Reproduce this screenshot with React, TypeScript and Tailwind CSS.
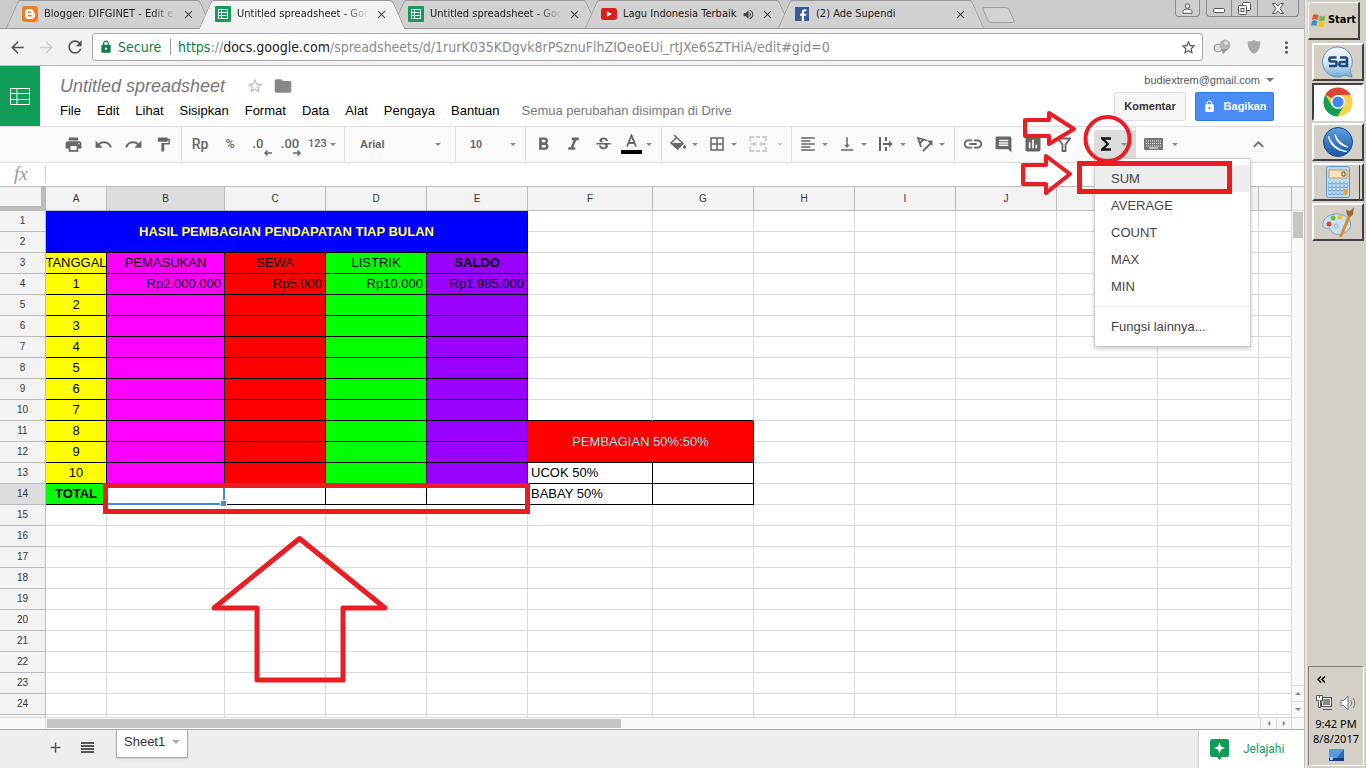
import React from 'react';
import {
  MdPrint, MdUndo, MdRedo, MdFormatPaint, MdFormatBold, MdFormatItalic, MdStrikethroughS,
  MdBorderAll, MdFormatAlignLeft, MdVerticalAlignBottom, MdInsertLink,
  MdInsertComment, MdInsertChart, MdFunctions, MdKeyboardArrowUp,
  MdArrowBack, MdArrowForward, MdRefresh, MdLock, MdStarBorder, MdFolder, MdClose, MdMoreVert,
  MdAdd, MdVolumeUp,
} from 'react-icons/md';

type Tab = { title: string; icon: React.ReactNode; active?: boolean; audio?: boolean };

const SheetsIcon = () => (
  <svg width="16" height="16" viewBox="0 0 16 16" className="shrink-0">
    <rect width="16" height="16" rx="1" fill="#0f9d58" />
    <path d="M3.5 3.5h9v9h-9zM3.5 6.5h9M3.5 9.5h9M6.5 3.5v9" fill="none" stroke="#fff" />
  </svg>
);

const BloggerIcon = () => (
  <svg width="16" height="16" viewBox="0 0 16 16" className="shrink-0">
    <rect width="16" height="16" rx="3" fill="#f57d20" />
    <path d="M6 3h2.5C10.500 3 11.500 4.200 11.500 6c0 .8.4 1 1 1 .5 0 .5.500.5 1v1.500C13 11.500 11.500 13 9.500 13H6.300C4.300 13 3 11.600 3 9.700V6.200C3 4.300 4.300 3 6 3z" fill="#fff" />
    <path d="M6.300 6.300h2.200M6.300 9.700h3.400" stroke="#f57d20" strokeWidth="1.400" strokeLinecap="round" />
  </svg>
);

const YoutubeIcon = () => (
  <svg width="16" height="16" viewBox="0 0 16 16" className="shrink-0">
    <rect y="2" width="16" height="12" rx="2.500" fill="#d8201f" />
    <path d="M6 5.200v5.600L10.800 8z" fill="#fff" />
  </svg>
);

const FacebookIcon = () => (
  <svg width="16" height="16" viewBox="0 0 16 16" className="shrink-0">
    <rect x="1" y="1" width="14" height="14" fill="#3b5998" />
    <path d="M10 15V9.700h2l.3-2H10V6.400c0-.7.3-1.100 1.100-1.100h1.300V3.400c-.3 0-1-.1-1.700-.1-1.800 0-2.900 1-2.900 2.800v1.600H6v2h1.800V15z" fill="#fff" />
  </svg>
);

const tabs: Tab[] = [
  { title: 'Blogger: DIFGINET - Edit e', icon: <BloggerIcon /> },
  { title: 'Untitled spreadsheet - Goo', icon: <SheetsIcon />, active: true },
  { title: 'Untitled spreadsheet - Goo', icon: <SheetsIcon /> },
  { title: 'Lagu Indonesia Terbaik', icon: <YoutubeIcon />, audio: true },
  { title: '(2) Ade Supendi', icon: <FacebookIcon /> },
];

const menus = ['File', 'Edit', 'Lihat', 'Sisipkan', 'Format', 'Data', 'Alat', 'Pengaya', 'Bantuan'];
const functions = ['SUM', 'AVERAGE', 'COUNT', 'MAX', 'MIN'];
const columns = ['A', 'B', 'C', 'D', 'E', 'F', 'G', 'H', 'I', 'J', 'K', 'L', ''];
const rows = Array.from({ length: 25 }, (_, i) => i + 1);

const columnFill = ['bg-[#ffff00]', 'bg-[#ff00ff]', 'bg-[#ff0000]', 'bg-[#00ff00]', 'bg-[#9900ff]'];
const headings = ['TANGGAL', 'PEMASUKAN', 'SEWA', 'LISTRIK', 'SALDO'];
const amounts = ['1', 'Rp2.000.000', 'Rp5.000', 'Rp10.000', 'Rp1.985.000'];

const Caret = ({ light = false }: { light?: boolean }) => (
  <svg width="6" height="3" viewBox="0 0 6 3" className={light ? 'shrink-0 text-[#ccc]' : 'shrink-0 text-[#888]'}>
    <path d="M0 0h6L3 3z" fill="currentColor" />
  </svg>
);

const Group = ({ children, className = '' }: { children: React.ReactNode; className?: string }) => (
  <div className={`flex h-full shrink-0 items-center border-r border-[#dcdcdc] ${className}`}>{children}</div>
);

const Tool = ({ label, children }: { label: string; children: React.ReactNode }) => (
  <button aria-label={label} className="flex h-7 w-[30px] shrink-0 items-center justify-center">{children}</button>
);

const MenuTool = ({ label, children }: { label: string; children: React.ReactNode }) => (
  <button aria-label={label} className="flex h-7 w-[39px] shrink-0 items-center gap-[5px] pl-[7px]">
    {children}
    <Caret />
  </button>
);

function TabStrip() {
  return (
    <div className="flex h-[29px] shrink-0 border-b border-[#9a9a9a] bg-[#cbcbcb] pl-3">
      {tabs.map((tab, i) => (
        <div
          key={i}
          className={`relative w-[193px] ${tab.active ? 'z-10 h-[29px]' : 'h-7'}`}
        >
          <div className={`absolute inset-y-0 right-1/2 left-0 -skew-x-[24deg] rounded-tl-[3px] border-t border-l border-[#979797] ${tab.active ? 'bg-[#f2f2f2]' : 'bg-[#d1d1d1]'}`} />
          <div className={`absolute inset-y-0 right-0 left-1/2 skew-x-[24deg] rounded-tr-[3px] border-t border-r border-[#979797] ${tab.active ? 'bg-[#f2f2f2]' : 'bg-[#d1d1d1]'}`} />
          <div className={`absolute inset-y-0 right-1/3 left-1/3 border-t border-[#979797] ${tab.active ? 'bg-[#f2f2f2]' : 'bg-[#d1d1d1]'}`} />
          <div className="relative flex h-7 items-center gap-[6px] px-[10px]">
            {tab.icon}
            <span className={`min-w-0 flex-1 text-[11px] whitespace-nowrap text-[#222] ${i < 3 ? '[mask-image:linear-gradient(to_right,black_82%,transparent)]' : ''}`}>{tab.title}</span>
            {tab.audio && <MdVolumeUp size={13} className="shrink-0 text-[#444]" />}
            <button aria-label="Tutup tab" className="shrink-0"><MdClose size={13} className="text-[#444]" /></button>
          </div>
        </div>
      ))}
      <button aria-label="Tab baru" className="mt-[7px] ml-2 h-4 w-[27px] skew-x-[24deg] rounded-[3px] border border-[#a0a0a0] bg-[#d3d3d3]" />
      <div className="mr-[5px] ml-auto flex h-[17px]">
        <button aria-label="Profil" className="mr-[6px] flex w-[25px] items-center justify-center rounded-b border border-t-0 border-[#8a8a8a] bg-[#cfcfcf]">
          <svg width="11" height="11" viewBox="0 0 11 11" fill="#fff" stroke="#555">
            <circle cx="5.500" cy="3" r="2.200" />
            <path d="M1 10.300V8.500C1 6.500 3 6.200 5.500 6.200s4.500.3 4.500 2.300v1.800z" />
          </svg>
        </button>
        <button aria-label="Perkecil" className="flex w-[26px] items-center justify-center rounded-bl border border-t-0 border-[#8a8a8a]">
          <svg width="12" height="12" viewBox="0 0 12 12"><rect x=".5" y="6.500" width="11" height="4" rx="1" fill="#fff" stroke="#555" /></svg>
        </button>
        <button aria-label="Pulihkan" className="flex w-[25px] items-center justify-center border-b border-[#8a8a8a]">
          <svg width="13" height="13" viewBox="0 0 13 13" fill="#fff" stroke="#555">
            <rect x="4.500" y=".5" width="8" height="8" rx="1" />
            <rect x=".5" y="3.500" width="8" height="9" rx="1" />
            <rect x="3" y="6.500" width="3" height="3" />
          </svg>
        </button>
        <button aria-label="Tutup" className="flex w-[42px] items-center justify-center rounded-br border border-t-0 border-[#8a8a8a]">
          <svg width="12" height="11" viewBox="0 0 12 11" fill="#fff" stroke="#555">
            <path d="M.5.500h3.200L6 3 8.300.5h3.200L8 5.500l3.500 5H8.300L6 8l-2.300 2.500H.5L4 5.500z" />
          </svg>
        </button>
      </div>
    </div>
  );
}

function AddressBar() {
  return (
    <div className="flex h-[37px] shrink-0 items-center border-b border-[#b9b9b9] bg-[#f2f2f2] pl-2">
      <button aria-label="Kembali" className="flex w-[29px] shrink-0"><MdArrowBack size={19} className="text-[#555]" /></button>
      <button aria-label="Maju" className="flex w-[28px] shrink-0"><MdArrowForward size={19} className="text-[#ccc]" /></button>
      <button aria-label="Muat ulang" className="flex w-[27px] shrink-0"><MdRefresh size={20} className="text-[#555]" /></button>
      <label className="relative flex h-7 min-w-0 flex-1 items-center rounded-[3px] border border-[#a9a9a9] bg-white pr-[5px] pl-[6px]">
        <MdLock size={14} className="mr-[5px] shrink-0 text-[#0b8043]" />
        <span className="w-[52px] shrink-0 text-[14px] text-[#0b8043]">Secure</span>
        <span className="mr-[7px] h-4 w-px shrink-0 bg-[#999]" />
        <span className="min-w-0 flex-1 truncate text-[14px] text-[#8a8a8a]">
          <span className="text-[#0b8043]">https</span>://<span className="text-[#222]">docs.google.com</span>
          /spreadsheets/d/1rurK035KDgvk8rPSznuFlhZIOeoEUi_rtJXe6SZTHiA/edit#gid=0
        </span>
        <input aria-label="Alamat" className="absolute inset-0 w-full opacity-0" />
        <MdStarBorder size={17} className="text-[#555]" />
      </label>
      <div className="flex shrink-0 items-center pr-2 pl-[10px]">
        <svg width="18" height="16" viewBox="0 0 18 16" className="mr-4">
          <circle cx="5" cy="9" r="4" fill="#ddd" stroke="#999" />
          <circle cx="12" cy="6" r="5.500" fill="#b5b5b5" />
          <path d="M8 10l2 5 5-5z" fill="#999" />
          <circle cx="13" cy="4" r="2" fill="#ddd" />
        </svg>
        <svg width="14" height="14" viewBox="0 0 14 14" className="mr-4">
          <path d="M7 0c2 1.200 4 1.600 6.300 1.600C13.500 7 12 11.500 7 14 2 11.500.5 7 .7 1.600 3 1.600 5 1.200 7 0z" fill="#a9a9a9" />
        </svg>
        <button aria-label="Menu"><MdMoreVert size={19} className="text-[#555]" /></button>
      </div>
    </div>
  );
}

function DocsHeader() {
  return (
    <header className="flex h-[60px] shrink-0 bg-white">
      <a href="#home" aria-label="Beranda Spreadsheet" className="flex w-10 shrink-0 items-center justify-center bg-[#0f9d58]">
        <svg width="20" height="17" viewBox="0 0 20 17" fill="none" stroke="#fff">
          <path d="M.5.500h19v16H.5zM.5 5.500h19M.5 11.500h19M7 .5v16" />
        </svg>
      </a>
      <div className="flex flex-col pt-2 pl-5">
        <div className="flex h-6 items-center">
          <input aria-label="Judul" defaultValue="Untitled spreadsheet" className="w-[186px] text-[18px] text-[#777] italic outline-none" />
          <MdStarBorder size={18} className="mr-[9px] text-[#bbb]" />
          <MdFolder size={20} className="text-[#888]" />
        </div>
        <nav className="flex h-[26px] items-center gap-4 text-[13px] text-black">
          {menus.map((m) => <button key={m}>{m}</button>)}
          <span className="ml-[6px] text-[#777]">Semua perubahan disimpan di Drive</span>
        </nav>
      </div>
      <div className="mr-[30px] ml-auto flex flex-col items-end pt-[6px]">
        <button className="flex h-4 items-center gap-[6px] text-[11px] text-[#555]">
          budiextrem@gmail.com
          <svg width="8" height="4" viewBox="0 0 8 4"><path d="M0 0h8L4 4z" fill="#777" /></svg>
        </button>
        <div className="mt-1 flex gap-[9px] text-[11px] font-bold">
          <button className="h-[29px] w-[72px] rounded-[2px] border border-[#dcdcdc] bg-[#f5f5f5] text-[#333]">Komentar</button>
          <button className="flex h-[29px] w-[79px] items-center justify-center gap-2 rounded-[2px] border border-[#3079ed] bg-[#4a8cf6] text-white">
            <MdLock size={13} />Bagikan
          </button>
        </div>
      </div>
    </header>
  );
}

function FunctionMenu() {
  return (
    <div role="menu" className="absolute top-full left-0 z-20 w-[157px] border border-[#ccc] bg-white py-[6px] text-[13px] text-[#444] shadow-[0_2px_4px_rgba(0,0,0,0.2)]">
      {functions.map((name) => (
        <button key={name} role="menuitem" className={`block h-[27px] w-full pl-4 text-left ${name === 'SUM' ? 'bg-[#eee]' : ''}`}>{name}</button>
      ))}
      <hr className="my-[6px] border-[#ebebeb]" />
      <button role="menuitem" className="block h-[27px] w-full pl-4 text-left">Fungsi lainnya...</button>
    </div>
  );
}

function Toolbar() {
  return (
    <div className="flex h-[37px] shrink-0 items-center border-y border-[#dcdcdc] bg-[#fafafa] pb-px text-[#666]">
      <Group className="pr-[3px] pl-[58px]">
        <Tool label="Cetak"><MdPrint size={19} /></Tool>
        <Tool label="Urungkan"><MdUndo size={19} /></Tool>
        <Tool label="Ulangi"><MdRedo size={19} /></Tool>
        <Tool label="Format cat"><MdFormatPaint size={17} /></Tool>
      </Group>
      <Group className="pr-1 pl-[3px] font-['Roboto',sans-serif] text-[14px] font-medium">
        <Tool label="Mata uang">Rp</Tool>
        <Tool label="Persen"><span className="text-[13px]">%</span></Tool>
        <Tool label="Kurangi desimal">
          <span className="relative pr-1 text-[13px]">.0
            <svg width="8" height="6" viewBox="0 0 8 6" className="absolute right-[-4px] bottom-[-2px]"><path d="M8 3H1M3.500.5L1 3l2.500 2.500" fill="none" stroke="currentColor" strokeWidth="1.500" /></svg>
          </span>
        </Tool>
        <Tool label="Tambah desimal">
          <span className="relative text-[13px]">.00
            <svg width="8" height="6" viewBox="0 0 8 6" className="absolute right-[-2px] bottom-[-2px]"><path d="M0 3h7M4.500.5L7 3 4.500 5.500" fill="none" stroke="currentColor" strokeWidth="1.500" /></svg>
          </span>
        </Tool>
        <button aria-label="Format lainnya" className="flex h-7 w-[35px] items-center gap-[3px] pl-[3px] text-[11px]">123<Caret /></button>
      </Group>
      <Group className="w-[111px] pr-[14px] pl-[15px]">
        <select aria-label="Font" className="min-w-0 flex-1 appearance-none text-[11px] font-bold outline-none"><option>Arial</option></select>
        <Caret />
      </Group>
      <Group className="w-[70px] pr-[9px] pl-[14px]">
        <select aria-label="Ukuran font" className="min-w-0 flex-1 appearance-none text-[11px] font-bold outline-none"><option>10</option></select>
        <Caret />
      </Group>
      <Group className="pr-2 pl-[2px]">
        <Tool label="Tebal"><MdFormatBold size={21} /></Tool>
        <Tool label="Miring"><MdFormatItalic size={21} /></Tool>
        <Tool label="Coret"><MdStrikethroughS size={19} /></Tool>
        <button aria-label="Warna teks" className="flex h-7 w-[35px] items-center gap-1 pl-[3px]">
          <svg width="21" height="20" viewBox="0 0 21 20" className="shrink-0">
            <path d="M6 12.500L10.500 1.500l4.500 11M7.500 9h6" fill="none" stroke="currentColor" strokeWidth="1.800" />
            <path d="M0 16h21v4H0z" fill="#000" />
          </svg>
          <Caret />
        </button>
      </Group>
      <Group className="w-[130px]">
        <MenuTool label="Warna isian">
          <svg width="18" height="18" viewBox="0 0 18 18" className="shrink-0">
            <path d="M5 0l9 8.500-5.500 5.500L2 8l5-5" fill="none" stroke="currentColor" strokeWidth="1.500" />
            <path d="M2.500 8h11l-5 5.500z" fill="currentColor" />
            <path d="M15.500 9.500c1 1.400 1.500 2 1.500 2.700a1.500 1.500 0 01-3 0c0-.7.5-1.300 1.500-2.700z" fill="currentColor" />
          </svg>
        </MenuTool>
        <MenuTool label="Batas"><MdBorderAll size={18} className="shrink-0" /></MenuTool>
        <button aria-label="Gabungkan sel" className="flex h-7 flex-1 items-center gap-[10px] pl-[9px] text-[#ccc]">
          <svg width="18" height="16" viewBox="0 0 18 16" fill="none" stroke="currentColor" strokeWidth="2" className="shrink-0">
            <path d="M5 1H1v4M1 11v4h4M13 1h4v4M17 11v4h-4M7 1h4M7 15h4M1 8h6M17 8h-6" />
            <path d="M5 6l2 2-2 2M13 6l-2 2 2 2" strokeWidth="1.500" />
          </svg>
          <Caret light />
        </button>
      </Group>
      <Group className="w-[163px]">
        <MenuTool label="Perataan horizontal"><MdFormatAlignLeft size={18} className="shrink-0" /></MenuTool>
        <MenuTool label="Perataan vertikal"><MdVerticalAlignBottom size={18} className="shrink-0" /></MenuTool>
        <MenuTool label="Pembungkusan teks">
          <svg width="18" height="18" viewBox="0 0 18 18" fill="none" stroke="currentColor" strokeWidth="2" className="shrink-0">
            <path d="M3 2v14M9 2v4M9 12v4M6 9h8" />
            <path d="M12 5.500L15.500 9 12 12.500z" fill="currentColor" stroke="none" />
          </svg>
        </MenuTool>
        <MenuTool label="Rotasi teks">
          <svg width="18" height="18" viewBox="0 0 18 18" fill="none" stroke="currentColor" strokeWidth="1.800" className="shrink-0">
            <path d="M5 12L2 3l9 2.500M4 8l3.500-3.500" />
            <path d="M7 16l8-8" />
            <path d="M11 5.500h5.500V11z" fill="currentColor" stroke="none" />
          </svg>
        </MenuTool>
      </Group>
      <Group className="pl-[3px]">
        <Tool label="Sisipkan tautan"><MdInsertLink size={22} /></Tool>
        <Tool label="Sisipkan komentar"><MdInsertComment size={19} /></Tool>
        <Tool label="Sisipkan diagram"><MdInsertChart size={20} /></Tool>
        <button aria-label="Filter" className="flex h-7 w-[46px] items-center gap-3 pl-[9px]">
          <svg width="14" height="15" viewBox="0 0 14 15" fill="none" stroke="currentColor" strokeWidth="1.800" className="shrink-0">
            <path d="M1 1.500h12L8.500 7.500V14h-3V7.500z" />
          </svg>
          <Caret />
        </button>
        <div className="relative flex h-7 w-[41px] items-center">
          <button aria-label="Fungsi" className="flex h-7 w-full items-center gap-[5px] bg-[#dcdcdc] pl-[2px] text-[#111]">
            <MdFunctions size={20} /><Caret />
          </button>
          <FunctionMenu />
        </div>
      </Group>
      <button aria-label="Alat masukan" className="flex h-7 items-center gap-[9px] pl-2">
        <svg width="19" height="12" viewBox="0 0 19 12">
          <rect width="19" height="12" rx="1" fill="#777" />
          <path d="M2 3h15M2 5.500h15M2 8h15" stroke="#fff" strokeDasharray="1 1" />
          <path d="M5 10h9" stroke="#fff" />
        </svg>
        <Caret />
      </button>
      <button aria-label="Sembunyikan menu" className="mr-[35px] ml-auto"><MdKeyboardArrowUp size={21} /></button>
    </div>
  );
}

// merged cells and coloured block in A1:G14, everything else is an empty gridline cell
function renderCell(row: number, col: number) {
  const base = 'h-[21px] overflow-hidden border-r border-b p-0 whitespace-nowrap';
  const key = `${row}-${col}`;
  if (row === 1 && col === 0) {
    return <td key={key} colSpan={5} rowSpan={2} className={`${base} border-black bg-[#0000ff] text-center font-bold text-[#ffff4d]`}>HASIL PEMBAGIAN PENDAPATAN TIAP BULAN</td>;
  }
  if (row <= 2 && col < 5) return null;
  if (row === 11 && col === 5) {
    return <td key={key} colSpan={2} rowSpan={2} className={`${base} border-black bg-[#ff0000] text-center text-[#76eeee]`}>PEMBAGIAN 50%:50%</td>;
  }
  if ((row === 11 || row === 12) && (col === 5 || col === 6)) return null;
  if (row === 3 && col < 5) {
    return (
      <td key={key} className={`${base} border-black ${columnFill[col]} ${col === 4 ? 'font-bold' : ''}`}>
        <div className="flex justify-center">{headings[col]}</div>
      </td>
    );
  }
  if (row >= 4 && row <= 13 && col < 5) {
    const value = col === 0 ? String(row - 3) : row === 4 ? amounts[col] : '';
    return <td key={key} className={`${base} border-black ${columnFill[col]} ${col === 0 ? 'text-center' : 'pr-[3px] text-right'}`}>{value}</td>;
  }
  if (row === 14 && col === 0) {
    return <td key={key} className={`${base} border-black bg-[#00ff00] text-center font-bold`}>TOTAL</td>;
  }
  if (row === 14 && col === 1) {
    return (
      <td key={key} className="relative h-[21px] border-r-2 border-b-2 border-[#4a86e8] p-0">
        <span className="absolute -right-1 -bottom-1 size-[7px] border border-white bg-[#4a86e8]" />
      </td>
    );
  }
  if ((row === 14 && col < 5) || ((row === 13 || row === 14) && (col === 5 || col === 6))) {
    return <td key={key} className={`${base} border-black pl-[3px]`}>{col === 5 ? (row === 13 ? 'UCOK 50%' : 'BABAY 50%') : ''}</td>;
  }
  if (row === 10 && (col === 5 || col === 6)) {
    return <td key={key} className={`${base} border-r-[#d9d9d9] border-b-black`} />;
  }
  return <td key={key} className={`${base} border-[#d9d9d9]`} />;
}

function Grid() {
  return (
    <div className="flex min-h-0 flex-1">
      <div className="min-w-0 flex-1 overflow-hidden">
        <table className="w-full table-fixed border-separate border-spacing-0 text-[13px] leading-5 text-black">
          <colgroup>
            <col className="w-[46px]" />
            <col className="w-[61px]" />
            <col className="w-[118px]" />
            <col className="w-[101px]" />
            <col className="w-[101px]" />
            <col className="w-[101px]" />
            <col className="w-[125px]" />
            <col className="w-[101px]" />
            <col className="w-[101px]" />
            <col className="w-[101px]" />
            <col className="w-[101px]" />
            <col className="w-[101px]" />
            <col className="w-[101px]" />
            <col />
          </colgroup>
          <thead>
            <tr className="text-[10px] text-[#333]">
              <th className="h-[25px] border-t border-r-[5px] border-b-[5px] border-[#bbb] bg-[#f3f3f3] p-0" />
              {columns.map((c, i) => (
                <th key={i} className={`h-[25px] border-t border-r border-b border-[#bbb] p-0 font-normal ${c === 'B' ? 'bg-[#ddd]' : 'bg-[#f3f3f3]'}`}>{c}</th>
              ))}
            </tr>
          </thead>
          <tbody>
            {rows.map((row) => (
              <tr key={row}>
                <th className={`h-[21px] border-r border-b border-[#bbb] p-0 text-[10px] font-normal text-[#333] ${row === 14 ? 'bg-[#ddd]' : 'bg-[#f3f3f3]'}`}>{row < 25 ? row : ''}</th>
                {columns.map((_, col) => renderCell(row, col))}
              </tr>
            ))}
          </tbody>
        </table>
      </div>
      {/* vertical scrollbar */}
      <div className="flex w-3 shrink-0 flex-col bg-[#f8f8f8]">
        <div className="h-[25px] border-y border-t-[#bbb] border-b-[#d9d9d9] bg-[#f3f3f3]" />
        <div className="mx-px mt-px h-[26px] bg-[#c5c5c5]" />
        <div className="mt-auto flex h-4 items-center justify-center border-t border-[#d9d9d9]"><span className="rotate-180"><Caret /></span></div>
        <div className="flex h-4 items-center justify-center border-t border-[#d9d9d9]"><Caret /></div>
      </div>
    </div>
  );
}

function Footer() {
  return (
    <>
      <div className="flex h-3 shrink-0 border-t border-[#d9d9d9] bg-[#f8f8f8]">
        <div className="w-[46px] shrink-0 border-r border-[#d9d9d9]" />
        <div className="min-w-0 flex-1 py-px pl-px"><div className="h-full w-[47.3%] bg-[#c5c5c5]" /></div>
        <div className="flex w-4 items-center justify-center border-l border-[#d9d9d9]"><span className="rotate-90"><Caret /></span></div>
        <div className="flex w-4 items-center justify-center border-x border-[#d9d9d9]"><span className="-rotate-90"><Caret /></span></div>
        <div className="w-3" />
      </div>
      <footer className="flex h-[39px] shrink-0 border-t border-[#aaa] bg-[#eee]">
        <button aria-label="Tambahkan sheet" className="ml-[47px] flex w-[34px] items-center pb-1 text-[#555]"><MdAdd size={17} /></button>
        <button aria-label="Semua sheet" className="mr-[22px] flex items-center pb-1 text-[#555]">
          <svg width="13" height="11" viewBox="0 0 13 11"><path d="M0 1h13M0 4h13M0 7h13M0 10h13" stroke="currentColor" strokeWidth="2" /></svg>
        </button>
        <button className="flex h-7 w-[72px] items-center justify-between border border-t-0 border-[#aaa] bg-white px-[7px] pb-1 text-[13px] text-[#333] shadow-sm">
          Sheet1
          <svg width="8" height="4" viewBox="0 0 8 4"><path d="M0 0h8L4 4z" fill="#aaa" /></svg>
        </button>
        <button className="ml-auto flex w-[106px] items-center gap-[14px] border-l border-[#d0d0d0] bg-white pl-[11px] font-['Roboto',sans-serif] text-[12px] text-[#0f9d58]">
          <svg width="19" height="21" viewBox="0 0 19 21">
            <path d="M2 0h15a2 2 0 012 2v14a2 2 0 01-2 2h-5l-2.500 3L7 18H2a2 2 0 01-2-2V2a2 2 0 012-2z" fill="#0f9d58" />
            <path d="M9.500 3.500L11 7.500l4 1.500-4 1.500-1.500 4L8 10.500 4 9l4-1.500z" fill="#fff" />
          </svg>
          Jelajahi
        </button>
      </footer>
    </>
  );
}

const TaskIcons: { label: string; active?: boolean; icon: React.ReactNode }[] = [
  {
    label: 'SA',
    icon: (
      <svg width="32" height="32" viewBox="0 0 32 32">
        <defs>
          <linearGradient id="sa" x1="0" y1="0" x2="0" y2="1"><stop offset="0" stopColor="#f2f8fd" /><stop offset=".55" stopColor="#d3e6f4" /><stop offset="1" stopColor="#6fa9d6" /></linearGradient>
        </defs>
        <path d="M16 1a15 15 0 1 0 7 28l7 2-2-7A15 15 0 0 0 16 1z" fill="url(#sa)" stroke="#6f8fae" />
        <path d="M14.500 11.500H9q-1.500 0-1.500 1.500v1q0 1.500 1.500 1.500h4q1.500 0 1.500 1.500v1.500q0 1.500-1.500 1.500H7" fill="none" stroke="#1f4a75" strokeWidth="2.600" />
        <path d="M18 11.500h5.500q1.500 0 1.500 1.500v7h-6q-1.500 0-1.500-1.500v-1q0-1.500 1.500-1.500h6" fill="none" stroke="#1f4a75" strokeWidth="2.600" />
      </svg>
    ),
  },
  {
    label: 'Google Chrome',
    active: true,
    icon: (
      <svg width="30" height="30" viewBox="0 0 30 30">
        <circle cx="15" cy="15" r="14.500" fill="#fcd04b" />
        <path d="M15 15L2.400 7.800A14.500 14.500 0 0 1 27.600 8H15z" fill="#db4437" />
        <path d="M15 15l-6.300 3.500L2.400 7.800A14.500 14.500 0 0 0 14.500 29.500l6.500-11z" fill="#0f9d58" />
        <circle cx="15" cy="15" r="7" fill="#fff" />
        <circle cx="15" cy="15" r="5.500" fill="#4285f4" />
      </svg>
    ),
  },
  {
    label: 'Winbox',
    icon: (
      <svg width="30" height="30" viewBox="0 0 30 30">
        <defs>
          <linearGradient id="wb" x1="0" y1="0" x2="0" y2="1"><stop offset="0" stopColor="#5c9fde" /><stop offset="1" stopColor="#1b57a5" /></linearGradient>
        </defs>
        <circle cx="15" cy="15" r="14.500" fill="url(#wb)" stroke="#174a8c" />
        <path d="M5.500 9c1 8.500 7.500 15 18 15.500C15 22.500 8.500 17.500 5.500 9z" fill="#fff" stroke="#fff" strokeWidth=".8" />
        <path d="M12 7.500c1 7 5.500 11.500 13 12.500-6-2.500-10.500-6.500-13-12.500z" fill="#fff" stroke="#fff" strokeWidth=".8" />
      </svg>
    ),
  },
  {
    label: 'Kalkulator',
    icon: (
      <svg width="24" height="32" viewBox="0 0 24 32">
        <rect x=".5" y=".5" width="23" height="31" rx="2" fill="#b9daf2" stroke="#5f98c8" />
        <rect x="3" y="4" width="18" height="8" fill="#fbe3bd" stroke="#c99a5b" />
        <path d="M16 6h3v4h-3z" fill="none" stroke="#555" />
        <path d="M2.500 17h19M2.500 20.500h19M2.500 24h19M2.500 27.500h15" stroke="#5c8fc0" strokeWidth="2.500" strokeDasharray="3 1" />
        <path d="M3 16.500h18M3 20h18M3 23.500h18M3 27h14" stroke="#e9f4fc" strokeWidth="1.500" strokeDasharray="2 2" />
        <path d="M18 23h3.500v6H18z" fill="#f0a030" />
      </svg>
    ),
  },
  {
    label: 'Paint',
    icon: (
      <svg width="34" height="32" viewBox="0 0 34 32">
        <path d="M14 8C5 9 1 15 2 20c1 3 4 2 6 2s2 3 4 5c4 3 14 1 17-5 3-7-4-15-15-14z" fill="#c9e2f1" stroke="#6fa5c8" />
        <circle cx="8" cy="18" r="2.500" fill="#e0483c" />
        <circle cx="12" cy="12" r="2.500" fill="#6cbf3e" />
        <circle cx="19" cy="11" r="2.500" fill="#f2c230" />
        <circle cx="15" cy="20" r="2" fill="#fff" stroke="#6fa5c8" />
        <path d="M18 31l9-22 3 1-9 21z" fill="#e08a30" />
        <path d="M26 9l-1-5 4 1 4-4-1 8-3 2z" fill="#9c6a3c" />
      </svg>
    ),
  },
];

function Taskbar() {
  return (
    <aside className="flex w-[62px] shrink-0 flex-col border-l border-[#c4bfb5] bg-[#d4d0c8] font-['Noto_Sans',sans-serif] shadow-[inset_2px_0_0_#e9e6df]">
      <button className="mt-[2px] ml-[3px] flex h-[38px] w-[52px] items-center justify-center gap-px border-t border-r-2 border-b-2 border-l border-t-white border-r-[#404040] border-b-[#404040] border-l-white font-['DejaVu_Sans_Condensed',sans-serif] text-[11px] font-bold text-black">
        <svg width="16" height="15" viewBox="0 0 16 15">
          <path d="M2 2c2-1 4-1 5.500 0L6.500 7C5 6 3 6 1 7z" fill="#e8562a" />
          <path d="M8.500 2.500c2 1 4 1 6 0l-1 5c-2 1-4 1-6 0z" fill="#7fba42" />
          <path d="M1 8c2-1 4-1 5.500 0l-1 5c-1.500-1-3.500-1-5.500 0z" fill="#3b8fd8" />
          <path d="M7.500 8.500c2 1 4 1 6 0l-1 5c-2 1-4 1-6 0z" fill="#f7c325" />
        </svg>
        Start
      </button>
      <div className="mt-[3px] ml-[7px] flex flex-col gap-[2px]">
        {TaskIcons.map((t) => (
          <button
            key={t.label}
            aria-label={t.label}
            className={`flex h-[38px] w-[52px] items-center justify-center border-2 ${t.active ? 'border-t-[#404040] border-r-white border-b-white border-l-[#404040] bg-white' : 'border-t-white border-r-[#404040] border-b-[#404040] border-l-white'} ${t.label === 'Kalkulator' ? 'shadow-[inset_-2px_0_0_#d4d0c8,inset_-3px_0_0_#404040]' : ''}`}
          >
            {t.icon}
          </button>
        ))}
      </div>
      <div className="mt-auto mr-[2px] mb-[2px] ml-[3px] flex h-[100px] flex-col items-center border border-t-[#808080] border-r-white border-b-white border-l-[#808080] text-[11px] leading-[15px] text-black">
        <button aria-label="Tampilkan ikon" className="mt-[9px] mr-auto ml-2 flex h-2">
          <svg width="9" height="7" viewBox="0 0 9 7" fill="none" stroke="#000" strokeWidth="1.500"><path d="M4 .5l-3 3 3 3M8 .5l-3 3 3 3" /></svg>
        </button>
        <div className="mt-[11px] mb-[5px] flex gap-[7px]">
          <svg width="17" height="16" viewBox="0 0 17 16">
            <rect x="5.500" y="2.500" width="10" height="9" fill="#8a8a8a" stroke="#555" />
            <path d="M6.500 3.500h8v7h-8z" fill="none" stroke="#e8e8e8" />
            <path d="M7 14.500h9" stroke="#555" />
            <path d="M.5.500v5h2v7h2v-7h2v-5z" fill="#fff" stroke="#555" />
            <path d="M3.500 0v3" stroke="#555" />
          </svg>
          <svg width="16" height="16" viewBox="0 0 16 16" fill="#fff" stroke="#777">
            <path d="M1 5.500h2.500L8 1v14l-4.500-4.500H1z" />
            <path d="M10.500 5c1.500 2 1.500 4 0 6M13 3c2.500 3 2.500 7 0 10" fill="none" />
          </svg>
        </div>
        <span>9:42 PM</span>
        <span>8/8/2017</span>
        <svg width="15" height="12" viewBox="0 0 15 12" className="mt-[3px]">
          <rect width="15" height="11" fill="#2a6ac0" />
          <path d="M0 0h15L6 11H0z" fill="#5b9ae0" />
          <path d="M0 9h15v3H0z" fill="#16407c" />
          <path d="M1 8h3v3H1z" fill="#9fd0f5" />
        </svg>
      </div>
    </aside>
  );
}

// red marker strokes drawn on top of the sheet
const Markers = () => (
  <svg className="pointer-events-none absolute inset-0 z-30 h-full w-full" fill="none" stroke="#ea1c24" strokeLinejoin="round">
    <path d="M1025 120h24v-7l25 16-25 15v-8h-24z" strokeWidth="4" />
    <path d="M1023 165h23v-9l24 18-24 19v-9h-23z" strokeWidth="4" />
    <circle cx="1107.500" cy="139" r="22" strokeWidth="4" />
    <rect x="1079.500" y="163.500" width="150" height="28" strokeWidth="5" strokeLinejoin="miter" />
    <rect x="105.500" y="485.500" width="422" height="26" strokeWidth="5" strokeLinejoin="miter" />
    <path d="M299.500 538.500L385 608h-42v72h-86v-72h-43z" strokeWidth="5" />
  </svg>
);

export default function App() {
  return (
    <div className="flex h-screen w-full overflow-hidden bg-white font-['Liberation_Sans',sans-serif]">
      <main className="relative flex min-w-0 flex-1 flex-col">
        <div className="font-['DejaVu_Sans_Condensed','Noto_Sans',sans-serif]">
          <TabStrip />
          <AddressBar />
        </div>
        <DocsHeader />
        <Toolbar />
        <label className="flex h-[23px] shrink-0 items-center">
          <span className="w-[45px] pl-[14px] font-['Liberation_Serif',serif] text-[19px] text-[#999] italic">fx</span>
          <span className="h-[17px] w-px bg-[#ccc]" />
          <input aria-label="Rumus" className="h-full min-w-0 flex-1 px-2 text-[13px] outline-none" />
        </label>
        <Grid />
        <Footer />
        <Markers />
      </main>
      <Taskbar />
    </div>
  );
}
